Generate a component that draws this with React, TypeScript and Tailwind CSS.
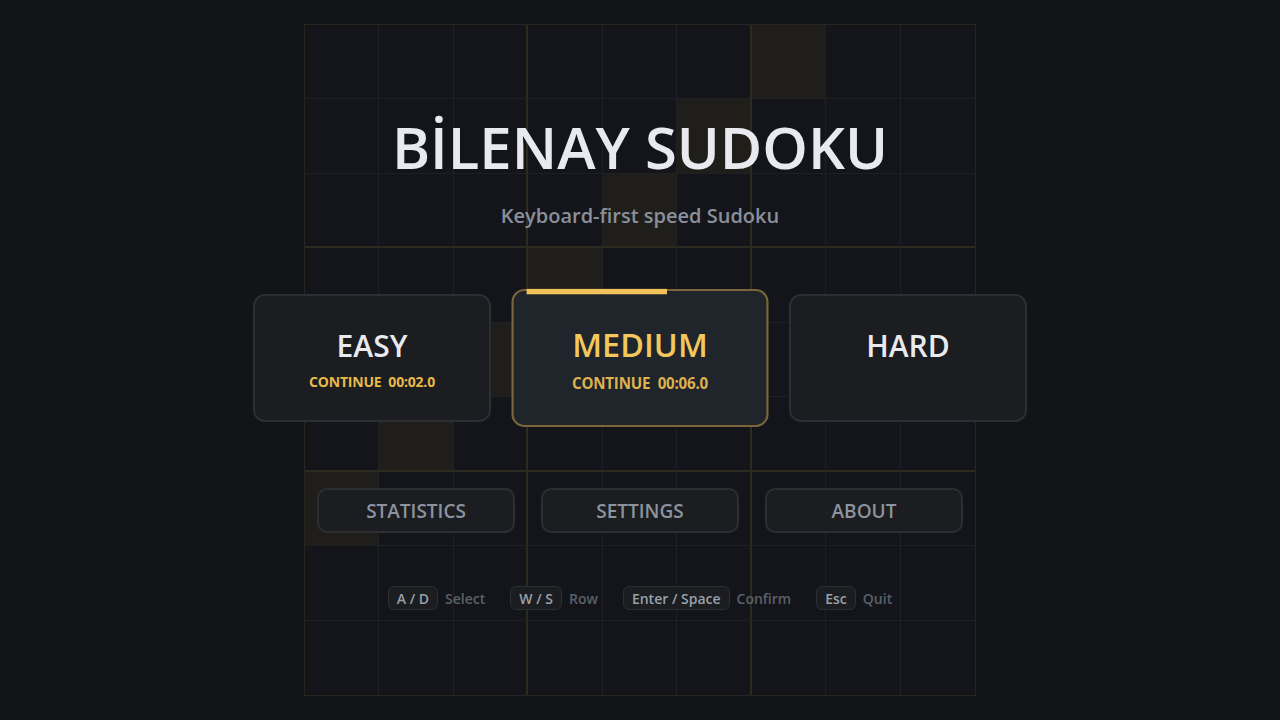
import React from 'react';

const highlighted = (r: number, c: number) => r + c === 6;

const Board: React.FC = () => {
    const cells = [];
    for (let r = 0; r < 9; r++) {
        for (let c = 0; c < 9; c++) {
            const right = c === 8 ? 'border-r-0' : c === 2 || c === 5 ? 'border-r-2 border-r-[#2d2a20]' : 'border-r border-r-[#1e2024]';
            const bottom = r === 8 ? 'border-b-0' : r === 2 || r === 5 ? 'border-b-2 border-b-[#2d2a20]' : 'border-b border-b-[#1e2024]';
            cells.push(
                <div
                    key={`${r}-${c}`}
                    className={`${right} ${bottom} ${highlighted(r, c) ? 'bg-[#1f1e1a]' : ''}`}
                />
            );
        }
    }
    return (
        <div className="absolute left-1/2 top-[24px] -translate-x-1/2 w-[672px] h-[672px] border border-[#27251f] bg-[#14151a] grid grid-cols-9 grid-rows-9">
            {cells}
        </div>
    );
};

const Card: React.FC<{ title: string; time?: string; active?: boolean }> = ({ title, time, active }) => (
    <div
        className={`relative w-[238px] h-[128px] rounded-[12px] border-2 flex flex-col items-center pt-[32px] ${
            active ? 'scale-[1.08] bg-[#20242b] border-[#7a6638]' : 'bg-[#1b1d21] border-[#2b2e33]'
        }`}
    >
        {active && <div className="absolute -top-[2px] left-[12px] w-[130px] h-[5px] bg-[#efc35a]" />}
        <div className={`text-[30px] leading-[36px] font-semibold ${active ? 'text-[#f2c75c]' : 'text-[#e9eaee]'}`}>
            {title}
        </div>
        {time && (
            <div className={`mt-[8px] text-[14px] leading-[20px] font-bold tracking-[-0.2px] ${active ? 'text-[#deb24e]' : 'text-[#e9b949]'}`}>
                CONTINUE&nbsp;&nbsp;{time}
            </div>
        )}
    </div>
);

const MenuButton: React.FC<{ label: string }> = ({ label }) => (
    <div className="w-[198px] h-[45px] rounded-[10px] border-2 border-[#2b2e33] bg-[#1b1d21] flex items-center justify-center pt-[1px] text-[19px] font-semibold text-[#8c939e]">
        {label}
    </div>
);

const Hint: React.FC<{ keys: string; label: string }> = ({ keys, label }) => (
    <div className="flex items-center gap-[7px]">
        <span className="h-[24px] px-[8px] flex items-center rounded-[6px] border border-[#2b2e33] bg-[#1b1d21] text-[14px] font-semibold text-[#9aa0aa]">
            {keys}
        </span>
        <span className="text-[14px] font-semibold text-[#5b6069]">{label}</span>
    </div>
);

const App: React.FC = () => {
    return (
        <div
            className="relative w-[1280px] h-[720px] bg-[#131418] overflow-hidden"
            style={{ fontFamily: '"Open Sans", "Noto Sans", sans-serif' }}
        >
            <Board />

            <div className="absolute inset-0 flex flex-col items-center pt-[118px]">
                <h1 className="text-[58px] leading-none font-semibold text-[#e9eaef]">
                    BİLENAY SUDOKU
                </h1>
                <p className="mt-[30px] text-[20px] leading-none font-semibold text-[#8a909b]">
                    Keyboard-first speed Sudoku
                </p>

                {/* Difficulty */}
                <div className="mt-[68px] flex items-center gap-[30px]">
                    <Card title="EASY" time="00:02.0" />
                    <Card title="MEDIUM" time="00:06.0" active />
                    <Card title="HARD" />
                </div>

                {/* Menu */}
                <div className="mt-[66px] flex gap-[26px]">
                    <MenuButton label="STATISTICS" />
                    <MenuButton label="SETTINGS" />
                    <MenuButton label="ABOUT" />
                </div>

                {/* Controls */}
                <div className="mt-[53px] flex items-center gap-[25px]">
                    <Hint keys="A / D" label="Select" />
                    <Hint keys="W / S" label="Row" />
                    <Hint keys="Enter / Space" label="Confirm" />
                    <Hint keys="Esc" label="Quit" />
                </div>
            </div>
        </div>
    );
};

export default App;
